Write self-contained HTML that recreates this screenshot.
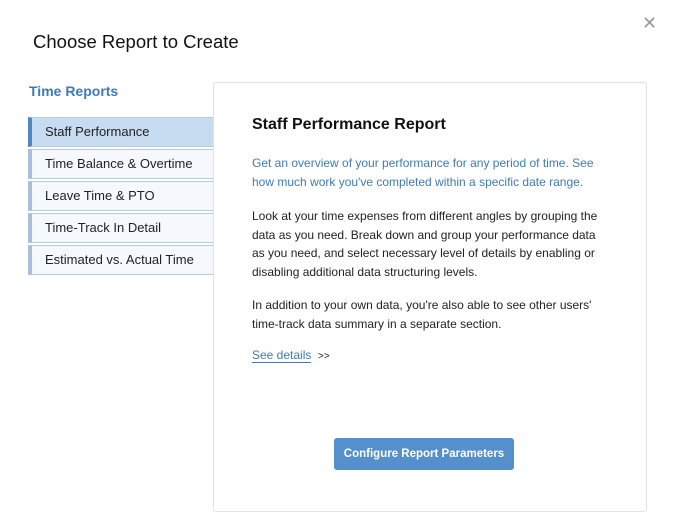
<!DOCTYPE html>
<html><head><style>
body{margin:0;width:674px;height:530px;background:#fff;font-family:"Liberation Sans",sans-serif;position:relative;overflow:hidden}
.t{position:absolute;left:33px;top:31px;font-size:18.5px;color:#111}
.x{position:absolute;left:642px;top:13px;font-size:18px;color:#999}
.h{position:absolute;left:29px;top:83px;font-size:14px;font-weight:bold;color:#3e7bb6}
.it{position:absolute;left:28px;width:181px;height:28px;border:1px solid #b8c9e0;border-left:4px solid #a9bfdc;background:#f5f8fc;font-size:13px;line-height:28px;padding-left:13px;box-sizing:content-box;color:#222}
.it.a{background:#c8dcf1;border-left-color:#4f86c6}
.p{position:absolute;left:213px;top:82px;width:432px;height:428px;border:1px solid #e2e2e2;border-radius:3px;background:#fff}
.p h2{position:absolute;left:38px;top:33px;margin:0;font-size:16px;font-weight:bold;color:#111}
.p p{position:absolute;left:38px;margin:0;font-size:12px;line-height:18.5px;width:350px}
.b{position:absolute;left:120px;top:355px;width:180px;height:32px;background:#5590cc;color:#fff;font-size:11.5px;font-weight:bold;border-radius:3px;text-align:center;line-height:32px}
</style></head><body>
<div class="t">Choose Report to Create</div>
<div class="x">✕</div>
<div class="h">Time Reports</div>
<div class="it a" style="top:117px">Staff Performance</div>
<div class="it" style="top:149px">Time Balance &amp; Overtime</div>
<div class="it" style="top:181px">Leave Time &amp; PTO</div>
<div class="it" style="top:213px">Time-Track In Detail</div>
<div class="it" style="top:245px">Estimated vs. Actual Time</div>
<div class="p">
<h2>Staff Performance Report</h2>
<p style="top:71px;color:#3e7bb6">Get an overview of your performance for any period of time. See how much work you've completed within a specific date range.</p>
<p style="top:124px;color:#222">Look at your time expenses from different angles by grouping the data as you need. Break down and group your performance data as you need, and select necessary level of details by enabling or disabling additional data structuring levels.</p>
<p style="top:213px;color:#222">In addition to your own data, you're also able to see other users' time-track data summary in a separate section.</p>
<p style="top:263px;color:#222"><span style="color:#3e7bb6;border-bottom:1px solid #3e7bb6">See details</span> &nbsp;<span style="font-size:10px">&gt;&gt;</span></p>
<div class="b">Configure Report Parameters</div>
</div>
</body></html>
